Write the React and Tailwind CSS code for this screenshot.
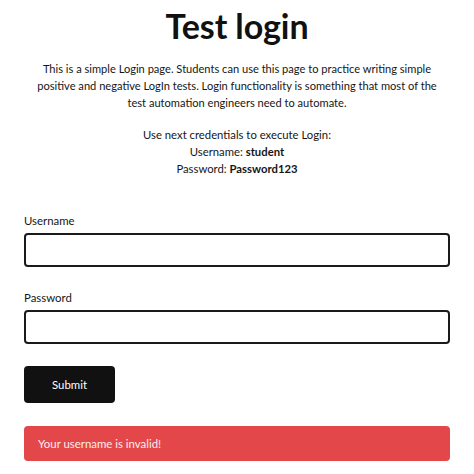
import React from 'react';

const App = () => {
  return (
    <div className="min-h-screen bg-white text-[#111] font-['Lato',sans-serif]">
      <div className="px-6 pt-[3px]">
        <h1 className="text-center text-[34px] font-bold leading-[46px] tracking-[-0.1px]">Test login</h1>

        <div className="mt-[11px] text-center text-[11.3px] leading-[17px] text-[#161616]">
          <p className="px-[12px] text-[11.1px]">
            This is a simple Login page. Students can use this page to practice writing simple positive and
            negative LogIn tests. Login functionality is something that most of the test automation engineers need
            to automate.
          </p>
          <p className="mt-[15px]">
            Use next credentials to execute Login:
            <br />
            Username: <b>student</b>
            <br />
            Password: <b>Password123</b>
          </p>
        </div>

        <form className="mt-[35px]" onSubmit={e => e.preventDefault()}>
          <label className="block text-[11.4px] leading-[17px] text-[#161616]">Username</label>
          <input
            type="text"
            className="mt-[4px] block w-full h-[34px] rounded-[4px] border-2 border-[#1a1a1a] px-2 text-[12px] outline-none"
          />

          <label className="mt-[22px] block text-[11.4px] leading-[17px] text-[#161616]">Password</label>
          <input
            type="password"
            className="mt-[4px] block w-full h-[34px] rounded-[4px] border-2 border-[#1a1a1a] px-2 text-[12px] outline-none"
          />

          <button
            type="submit"
            className="mt-[22px] block w-[91px] h-[37px] rounded-[4px] bg-[#111] text-white text-[11.4px]"
          >
            Submit
          </button>

          <div className="mt-[23px] h-[35px] flex items-center rounded-[4px] bg-[#e3474a] px-[14px] text-[11.4px] text-[#fdeeee]">
            Your username is invalid!
          </div>
        </form>
      </div>
    </div>
  );
};

export default App;
